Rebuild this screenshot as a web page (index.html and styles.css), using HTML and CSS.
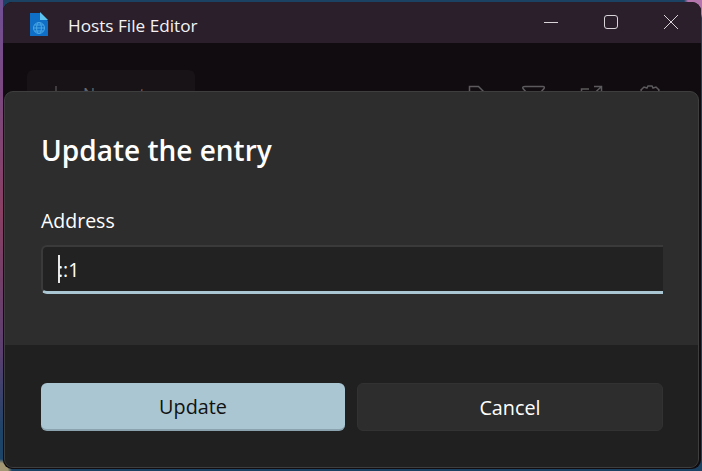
FILE: index.html
```html
<!DOCTYPE html>
<html lang="en">
<head>
  <meta charset="UTF-8">
  <title>Hosts File Editor</title>
  <link rel="stylesheet" href="styles.css">
</head>
<body>
  <div class="window">
    <div class="titlebar">
      <svg class="app-icon" width="18" height="24" viewBox="0 0 18 24">
        <path d="M0 1h10l8 8v15H0z" fill="#0f6fc6"/>
        <path d="M10 0l8 8h-8z" fill="#5cc3f0"/>
        <g fill="none" stroke="#4aa8e6" stroke-width="1">
          <circle cx="9" cy="16" r="5.5"/>
          <ellipse cx="9" cy="16" rx="2.4" ry="5.5"/>
          <path d="M3.5 16h11M4.5 13h9M4.5 19h9"/>
        </g>
      </svg>
      <span class="app-title">Hosts File Editor</span>
      <div class="caption">
        <svg width="16" height="16" viewBox="0 0 16 16"><path d="M1 8.5h14" stroke="#d8d4d8" stroke-width="1"/></svg>
        <svg width="16" height="16" viewBox="0 0 16 16"><rect x="1.5" y="1.5" width="13" height="13" rx="2.5" fill="none" stroke="#d8d4d8" stroke-width="1"/></svg>
        <svg width="16" height="16" viewBox="0 0 16 16"><path d="M1 1l14 14M15 1L1 15" stroke="#d8d4d8" stroke-width="1"/></svg>
      </div>
    </div>
    <div class="content">
      <div class="toolbar">
        <div class="new-entry">
          <svg width="18" height="18" viewBox="0 0 18 18"><path d="M9 1v16M1 9h16" stroke="#5c5a5c" stroke-width="1.2"/></svg>
          <span>New entry</span>
        </div>
        <div class="tools">
          <svg width="20" height="24" viewBox="0 0 20 24"><path d="M1.500 1.500h9l8 8v13h-17z" fill="none" stroke="#5c5a5c" stroke-width="1.500"/></svg>
          <svg width="24" height="24" viewBox="0 0 24 24"><path d="M3 1.500h18q2 0 1 2l-8 9v9l-5-3v-6l-8-9q-1-2 2-2z" fill="none" stroke="#5c5a5c" stroke-width="1.500"/></svg>
          <svg width="24" height="24" viewBox="0 0 24 24"><path d="M9 4H1.500v18h18v-7M7 15L21 2M14 1.500h7.500V9" fill="none" stroke="#5c5a5c" stroke-width="1.500"/></svg>
          <svg width="24" height="24" viewBox="0 0 24 24"><path d="M9 3l1-2h4l1 2 3-1 3 3-1 3 2 2v4l-2 1 1 3-3 3-3-1-1 2h-4l-1-2-3 1-3-3 1-3-2-1v-4l2-2-1-3 3-3z" fill="none" stroke="#5c5a5c" stroke-width="1.500"/></svg>
        </div>
      </div>
    </div>
    <div class="dialog">
      <div class="dialog-body">
        <h1 class="dialog-title">Update the entry</h1>
        <label class="field-label">Address</label>
        <div class="field">
          <span class="caret"></span><span class="field-value">::1</span>
        </div>
      </div>
      <div class="dialog-footer">
        <button class="btn btn-primary">Update</button>
        <button class="btn">Cancel</button>
      </div>
    </div>
  </div>
</body>
</html>
```

FILE: styles.css
```css
* {
  margin: 0;
  padding: 0;
  box-sizing: border-box;
}
html, body {
  width: 702px;
  height: 471px;
  overflow: hidden;
}
body {
  padding: 2px 0 0 3px;
  background:
    radial-gradient(circle at 100% 0, #b474ac 0, #b474ac 14px, transparent 18px),
    radial-gradient(circle at 0 100%, #a39673 0, #a39673 8px, transparent 12px),
    linear-gradient(180deg, #6f4f94 0, #8a3f63 45%, #5a3f70 75%, #1c4468 92%) left / 3px 100% no-repeat,
    #1c4263;
  font-family: "Open Sans", "Noto Sans", sans-serif;
  color: #fff;
}
.window {
  position: relative;
  width: 698px;
  height: 467px;
  background: #100c0f;
  border-radius: 9px;
  overflow: hidden;
}
.titlebar {
  height: 41px;
  display: flex;
  align-items: center;
  padding-left: 27px;
  background: #2a1f2a;
}
.app-icon {
  margin: 2px 20px 0 0;
}
.app-title {
  font-size: 17.2px;
  color: #f4f2f4;
  padding-top: 5px;
}
.caption {
  margin-left: auto;
  display: flex;
  gap: 44px;
  padding: 0 22px 1px 0;
}
.toolbar {
  display: flex;
  padding: 27px 39px 0 24px;
}
.new-entry {
  width: 168px;
  height: 48px;
  display: flex;
  align-items: center;
  gap: 18px;
  padding-left: 20px;
  background: #171316;
  border-radius: 6px;
  color: #6a686a;
  font-size: 16px;
}
.tools {
  display: flex;
  gap: 34px;
  margin-left: auto;
  padding-top: 15px;
}
.dialog {
  position: absolute;
  left: 1px;
  top: 89px;
  width: 695px;
  height: 377px;
  display: flex;
  flex-direction: column;
  background: #2d2d2d;
  border: 1px solid #3e3e3e;
  border-radius: 9px;
  overflow: hidden;
}
.dialog-body {
  height: 253px;
  padding: 39px 35px 0 36px;
}
.dialog-title {
  font-size: 28px;
  font-weight: 600;
  line-height: 38px;
}
.field-label {
  display: block;
  margin-top: 39px;
  font-size: 19.5px;
  line-height: 26px;
}
.field {
  display: flex;
  align-items: center;
  height: 49px;
  margin-top: 11px;
  padding-left: 15px;
  background: #222222;
  border-top: 2px solid #3a3a3a;
  border-left: 2px solid #3a3a3a;
  border-bottom: 3px solid #aac6d3;
  border-radius: 6px 0 0 6px;
  font-size: 19.5px;
}
.caret {
  width: 2px;
  height: 28px;
  margin-right: -2px;
  background: #e6e6e6;
}
.dialog-footer {
  flex: 1;
  display: flex;
  gap: 12px;
  padding: 38px 35px 0 36px;
  background: #202020;
}
.btn {
  flex: 1;
  height: 48px;
  background: #2d2d2d;
  border: 1px solid #323232;
  border-radius: 6px;
  color: #fff;
  font-family: inherit;
  font-size: 19.8px;
}
.btn-primary {
  background: #aac6d3;
  border: none;
  border-bottom: 2px solid #8ba3ae;
  color: #111;
}
```
